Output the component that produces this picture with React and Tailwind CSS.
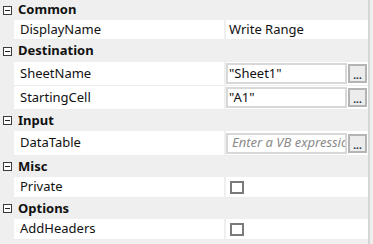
import React from 'react';

const FONT = { fontFamily: '"Noto Sans", "Open Sans", sans-serif' };

const sections = [
  { title: 'Common', h: 'h-[20px]', rows: [{ name: 'DisplayName', kind: 'text', value: 'Write Range', h: 'h-[20px]' }] },
  {
    title: 'Destination',
    h: 'h-[22px]',
    rows: [
      { name: 'SheetName', kind: 'input', value: '"Sheet1"', h: 'h-[24px]' },
      { name: 'StartingCell', kind: 'input', value: '"A1"', h: 'h-[24px]' },
    ],
  },
  { title: 'Input', h: 'h-[21px]', rows: [{ name: 'DataTable', kind: 'input', placeholder: 'Enter a VB expression', h: 'h-[25px]' }] },
  { title: 'Misc', h: 'h-[21px]', rows: [{ name: 'Private', kind: 'check', h: 'h-[21px]' }] },
  { title: 'Options', h: 'h-[21px]', rows: [{ name: 'AddHeaders', kind: 'check', h: 'h-[21px]' }] },
];

function Minus() {
  return (
    <div className="ml-[3px] mr-[6px] flex h-[9px] w-[9px] items-center justify-center border border-[#3a3a3a] bg-white">
      <div className="h-px w-[5px] bg-[#222]" />
    </div>
  );
}

function Value({ row }) {
  if (row.kind === 'text') {
    return <div className="pl-[3px] text-[13px] text-[#111]">{row.value}</div>;
  }
  if (row.kind === 'check') {
    return <div className="ml-[4px] h-[13px] w-[14px] border-2 border-[#7a7a7a] bg-white" />;
  }
  return (
    <div className="flex w-full min-w-0 items-center gap-[1px] pr-[1px]">
      <div className="flex h-[21px] min-w-0 flex-1 items-center overflow-hidden whitespace-nowrap border-2 border-[#d8d8d8] bg-white">
        {row.placeholder ? (
          <span className="pl-[4px] text-[13px] italic text-[#8a8a8a]">{row.placeholder}</span>
        ) : (
          <span className="pl-[1px] text-[13px] text-[#111]">{row.value}</span>
        )}
      </div>
      <div className="flex h-[19px] w-[19px] shrink-0 items-end justify-center border-2 border-[#b4b4b4] bg-[#ececec] pb-[1px] text-[10px] font-bold leading-[10px] text-[#1a2a40]">
        ...
      </div>
    </div>
  );
}

export default function App() {
  return (
    <div className="flex h-[244px] w-[373px] overflow-hidden bg-[#efefef]" style={FONT}>
      <div className="flex w-[368px] shrink-0 flex-col">
        {sections.map((s) => (
          <React.Fragment key={s.title}>
            <div className={`flex ${s.h} items-center bg-[#efefef]`}>
              <Minus />
              <span className="text-[13px] font-bold text-[#111]">{s.title}</span>
            </div>
            {s.rows.map((r) => (
              <div key={r.name} className={`flex ${r.h} pl-[14px]`}>
                <div className="flex min-w-0 flex-1 border-b border-[#ededed] bg-white">
                  <div className="flex w-[212px] shrink-0 items-center border-r-2 border-[#efefef] pl-[6px] text-[13px] text-[#111]">
                    {r.name}
                  </div>
                  <div className="flex min-w-0 flex-1 items-center">
                    <Value row={r} />
                  </div>
                </div>
              </div>
            ))}
          </React.Fragment>
        ))}
      </div>
      <div className="w-[2px] shrink-0 bg-[#d6d6d6]" />
    </div>
  );
}
